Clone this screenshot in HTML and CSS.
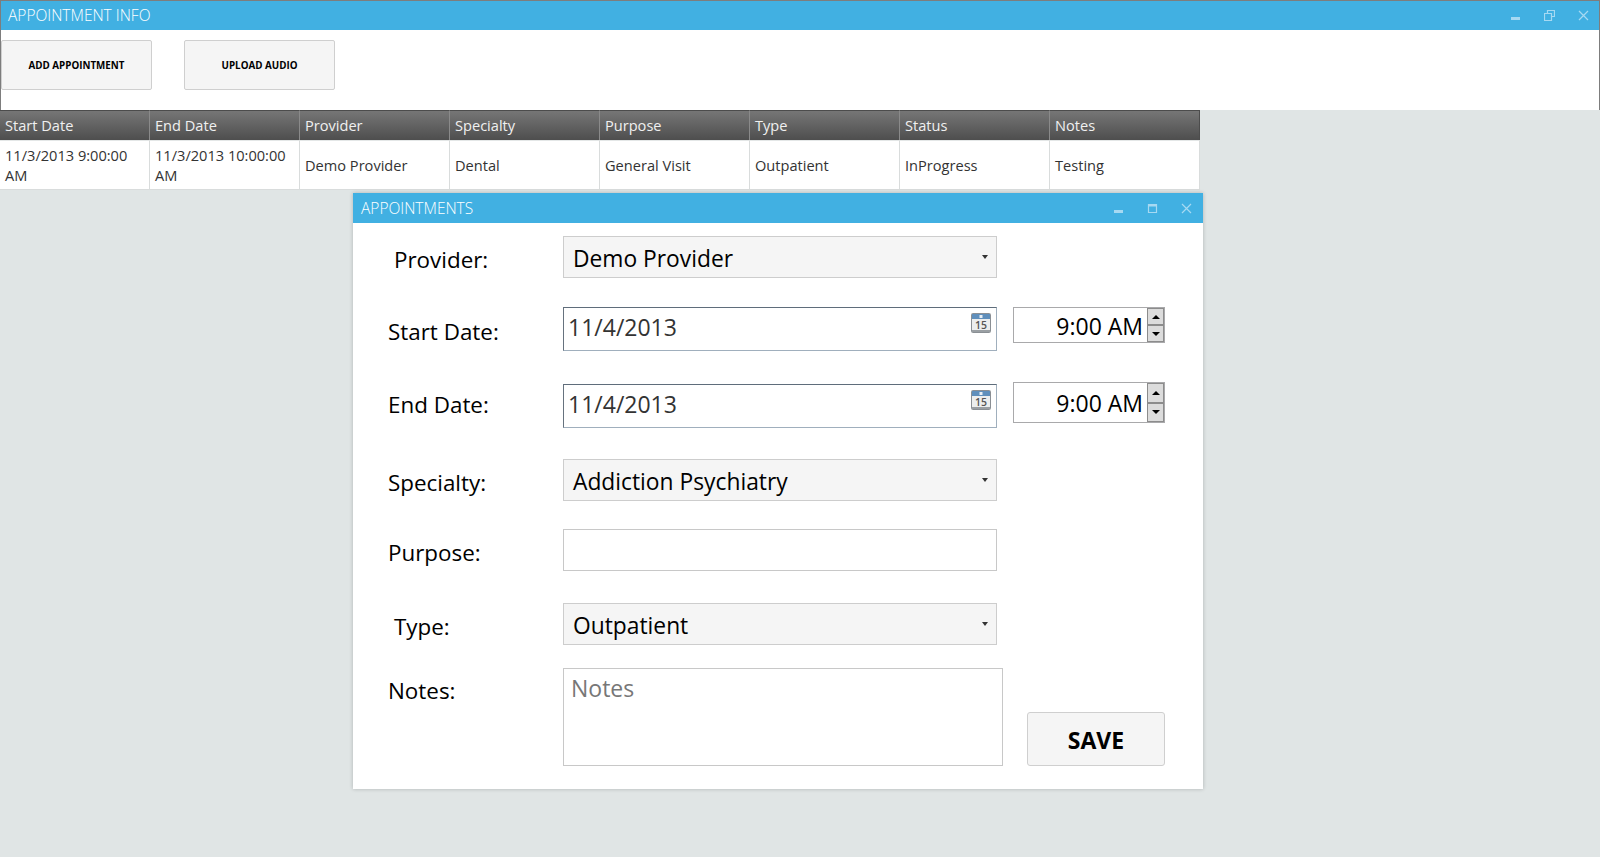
FILE: index.html
```html
<!DOCTYPE html>
<html lang="en">
<head>
<meta charset="utf-8">
<title>Appointment Info</title>
<link rel="stylesheet" href="styles.css">
</head>
<body>
<section class="main-window">
  <header class="titlebar titlebar-main">
    <span class="title-text">APPOINTMENT INFO</span>
    <div class="win-controls win-controls-main">
      <svg class="win-icon" viewBox="0 0 11 11"><rect x="1" y="7" width="9" height="3"/></svg>
      <svg class="win-icon" viewBox="0 0 11 11"><path class="line" d="M3.5 3V.5h7v6H8M.5 3.5h7v7h-7zM.5 3.5h7"/></svg>
      <svg class="win-icon" viewBox="0 0 11 11"><path class="line" d="M1 1l9 9M10 1l-9 9"/></svg>
    </div>
  </header>
  <div class="toolbar">
    <button class="btn-small">ADD APPOINTMENT</button>
    <button class="btn-small">UPLOAD AUDIO</button>
  </div>
</section>

<table class="grid">
  <thead>
    <tr><th>Start Date</th><th>End Date</th><th>Provider</th><th>Specialty</th><th>Purpose</th><th>Type</th><th>Status</th><th>Notes</th></tr>
  </thead>
  <tbody>
    <tr><td>11/3/2013 9:00:00 AM</td><td>11/3/2013 10:00:00 AM</td><td>Demo Provider</td><td>Dental</td><td>General Visit</td><td>Outpatient</td><td>InProgress</td><td>Testing</td></tr>
  </tbody>
</table>

<section class="dialog">
  <header class="titlebar titlebar-dialog">
    <span class="title-text">APPOINTMENTS</span>
    <div class="win-controls win-controls-dialog">
      <svg class="win-icon" viewBox="0 0 11 11"><rect x="1" y="7" width="9" height="3"/></svg>
      <svg class="win-icon" viewBox="0 0 11 11"><path class="line" d="M1.5 1.5h8v8h-8z"/><rect x="1" y="1" width="9" height="2.5"/></svg>
      <svg class="win-icon" viewBox="0 0 11 11"><path class="line" d="M1 1l9 9M10 1l-9 9"/></svg>
    </div>
  </header>
  <div class="form">
    <div class="row row-provider">
      <label class="label label-indent">Provider:</label>
      <div class="combo"><span>Demo Provider</span><i class="caret"></i></div>
    </div>
    <div class="row row-start">
      <label class="label label-start">Start Date:</label>
      <div class="date">
        <span>11/4/2013</span>
        <svg class="cal" viewBox="0 0 20 20"><rect x=".5" y=".5" width="19" height="19" rx="1" fill="#eceeee" stroke="#8a8f94"/><rect x="1" y="1" width="18" height="5" fill="#5f8fbc"/><rect x="8.5" y="2" width="3" height="3" fill="#e8eef4"/><rect x="1" y="17" width="18" height="2" fill="#9a9fa3"/><text x="10" y="16" class="cal-num">15</text></svg>
      </div>
      <div class="time">
        <span class="time-val">9:00 AM</span>
        <div class="spin">
          <div class="spin-btn"><i class="up"></i></div>
          <div class="spin-btn"><i class="down"></i></div>
        </div>
      </div>
    </div>
    <div class="row row-end">
      <label class="label label-end">End Date:</label>
      <div class="date">
        <span>11/4/2013</span>
        <svg class="cal" viewBox="0 0 20 20"><rect x=".5" y=".5" width="19" height="19" rx="1" fill="#eceeee" stroke="#8a8f94"/><rect x="1" y="1" width="18" height="5" fill="#5f8fbc"/><rect x="8.5" y="2" width="3" height="3" fill="#e8eef4"/><rect x="1" y="17" width="18" height="2" fill="#9a9fa3"/><text x="10" y="16" class="cal-num">15</text></svg>
      </div>
      <div class="time time-tall">
        <span class="time-val">9:00 AM</span>
        <div class="spin">
          <div class="spin-btn"><i class="up"></i></div>
          <div class="spin-btn"><i class="down"></i></div>
        </div>
      </div>
    </div>
    <div class="row row-specialty">
      <label class="label label-specialty">Specialty:</label>
      <div class="combo"><span>Addiction Psychiatry</span><i class="caret"></i></div>
    </div>
    <div class="row row-purpose">
      <label class="label label-purpose">Purpose:</label>
      <div class="input"></div>
    </div>
    <div class="row row-type">
      <label class="label label-indent">Type:</label>
      <div class="combo"><span>Outpatient</span><i class="caret"></i></div>
    </div>
    <div class="row row-notes">
      <label class="label label-notes">Notes:</label>
      <div class="notes">Notes</div>
      <button class="btn-save">SAVE</button>
    </div>
  </div>
</section>
</body>
</html>
```

FILE: styles.css
```css
* { box-sizing: border-box; }
html, body { margin: 0; padding: 0; }
body {
  width: 1600px;
  height: 857px;
  overflow: hidden;
  position: relative;
  background: #e0e5e5;
  font-family: "Open Sans", "Noto Sans", sans-serif;
  color: #000;
}
.main-window {
  height: 110px;
  background: #fff;
  border: 1px solid #7d7d7d;
  border-width: 1px 1px 0 1px;
}
.titlebar {
  display: flex;
  align-items: center;
  justify-content: space-between;
  background: #41b0e2;
  color: #fff;
}
.titlebar-main { height: 29px; padding: 0 10px 0 7px; }
.titlebar-dialog { height: 30px; padding: 0 11px 0 8px; }
.title-text { font-size: 15.5px; font-weight: 300; }
.titlebar-main .title-text { margin-top: -2px; }
.win-controls { display: flex; align-items: center; gap: 23px; }
.win-controls-main { margin-top: -1px; }
.win-controls-dialog { margin-top: 1px; }
.win-icon { width: 11px; height: 11px; fill: #a6d9f2; }
.line { fill: none; stroke: #a6d9f2; stroke-width: 1.2; }
.toolbar { display: flex; gap: 32px; padding-top: 10px; }
.btn-small {
  width: 151px;
  height: 50px;
  background: #f5f5f5;
  border: 1px solid #cfcfcf;
  border-radius: 2px;
  font: 700 9.8px "Open Sans", sans-serif;
  color: #000;
  padding: 0;
}
.grid {
  width: 1200px;
  table-layout: fixed;
  border-collapse: separate;
  border-spacing: 0;
  font-size: 14.6px;
}
.grid th {
  height: 30px;
  padding: 0 0 2px 5px;
  text-align: left;
  font-weight: 400;
  color: #f0f0f0;
  background: linear-gradient(#767676, #4e4e4e);
  border-right: 1px solid #8a8a8a;
  border-top: 1px solid #4c4c4c;
}
.grid th:last-child { border-right-color: #4c4c4c; }
.grid td {
  height: 50px;
  padding: 0 2px 0 5px;
  background: #fff;
  color: #333;
  line-height: 20px;
  border-right: 1px solid #d9dcdc;
  border-top: 1px solid #e4e7e7;
  border-bottom: 1px solid #d9dcdc;
}
.dialog {
  position: absolute;
  left: 353px;
  top: 193px;
  width: 850px;
  height: 596px;
  background: #fff;
  box-shadow: 0 0 4px rgba(0, 0, 0, .22);
}
.form { padding: 13px 0 0 35px; }
.row { display: flex; align-items: flex-start; }
.row-start { margin-top: 29px; }
.row-end { margin-top: 33px; }
.row-specialty { margin-top: 31px; }
.row-purpose { margin-top: 28px; }
.row-type { margin-top: 32px; }
.row-notes { margin-top: 23px; }
.label {
  width: 175px;
  font-size: 22.4px;
  line-height: 32px;
  flex: none;
}
.label-indent { padding-left: 6px; margin-top: 8px; }
.label-start { margin-top: 9px; }
.label-end { margin-top: 5px; }
.label-specialty { margin-top: 8px; }
.label-purpose { margin-top: 8px; }
.label-notes { margin-top: 7px; }
.combo, .input, .date {
  width: 434px;
  flex: none;
  position: relative;
}
.combo {
  height: 42px;
  display: flex;
  align-items: center;
  padding-left: 9px;
  font-size: 22.8px;
  background: #f5f5f5;
  border: 1px solid #cdcdcd;
}
.combo span { margin-top: 2px; }
.caret {
  position: absolute;
  right: 8px;
  top: 18px;
  width: 0;
  height: 0;
  border: 3px solid transparent;
  border-top: 4px solid #333;
  border-bottom: 0;
}
.input { height: 42px; border: 1px solid #c8c8c8; background: #fff; }
.date {
  height: 44px;
  display: flex;
  align-items: center;
  padding: 0 0 4px 4px;
  font-size: 23px;
  color: #333;
  border: 1px solid;
  border-color: #5f6d7b #a0afbd #a0afbd #66727e;
}
.cal { position: absolute; right: 5px; top: 5px; width: 20px; height: 20px; }
.cal-num { font: 600 10.5px "Open Sans", sans-serif; fill: #555; text-anchor: middle; }
.time {
  width: 152px;
  height: 36px;
  margin-left: 16px;
  display: flex;
  justify-content: flex-end;
  border: 1px solid #a9a9ab;
  font-size: 23px;
}
.time-tall { height: 41px; margin-top: -2px; }
.time-val { align-self: center; margin-right: 4px; margin-top: 1px; }
.time-tall .time-val { margin-top: 0; }
.spin { width: 17px; display: flex; flex-direction: column; flex: none; }
.spin-btn {
  flex: 1;
  display: flex;
  align-items: center;
  justify-content: center;
  background: #dcdcdc;
  border: 1px solid #8c8c8c;
}
.spin-btn i { width: 0; height: 0; border: 4px solid transparent; }
.spin-btn .up { border-bottom: 4px solid #000; border-top: 0; }
.spin-btn .down { border-top: 4px solid #000; border-bottom: 0; }
.notes {
  width: 440px;
  height: 98px;
  flex: none;
  padding: 3px 7px;
  border: 1px solid #c8c8c8;
  font-size: 23px;
  color: #777;
}
.btn-save {
  width: 138px;
  height: 54px;
  margin: 44px 0 0 24px;
  padding: 2px 0 0;
  flex: none;
  background: #f5f5f5;
  border: 1px solid #cfcfcf;
  border-radius: 3px;
  font: 700 23px "Open Sans", sans-serif;
  color: #000;
}
```
